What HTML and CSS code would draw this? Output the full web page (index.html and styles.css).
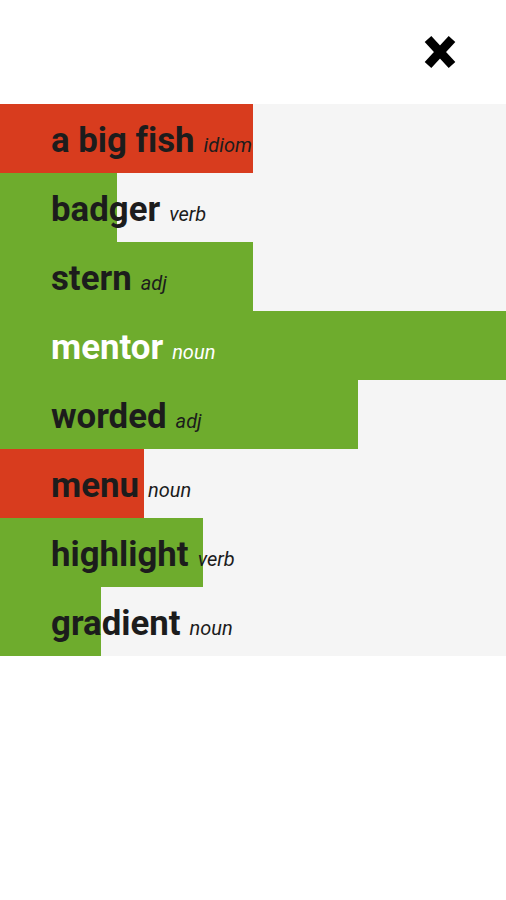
FILE: index.html
```html
<!DOCTYPE html>
<html>
<head>
<meta charset="utf-8">
<link rel="stylesheet" href="styles.css">
</head>
<body>
<header class="top">
  <button class="close" aria-label="Close">
    <svg width="32" height="34" viewBox="0 0 32 34">
      <path d="M4 4 L28 30 M28 4 L4 30" stroke="#000" stroke-width="9" stroke-linecap="butt" fill="none"/>
    </svg>
  </button>
</header>
<ul class="list">
  <li class="row"><div class="bar red" style="width:253px"></div><span class="word">a big fish</span><span class="pos">idiom</span></li>
  <li class="row"><div class="bar green" style="width:117px"></div><span class="word">badger</span><span class="pos">verb</span></li>
  <li class="row"><div class="bar green" style="width:253px"></div><span class="word">stern</span><span class="pos">adj</span></li>
  <li class="row light"><div class="bar green" style="width:506px"></div><span class="word">mentor</span><span class="pos">noun</span></li>
  <li class="row"><div class="bar green" style="width:358px"></div><span class="word">worded</span><span class="pos">adj</span></li>
  <li class="row"><div class="bar red" style="width:144px"></div><span class="word">menu</span><span class="pos">noun</span></li>
  <li class="row"><div class="bar green" style="width:203px"></div><span class="word">highlight</span><span class="pos">verb</span></li>
  <li class="row"><div class="bar green" style="width:101px"></div><span class="word">gradient</span><span class="pos">noun</span></li>
</ul>
</body>
</html>
```
FILE: styles.css
```css
html, body {
  margin: 0;
  padding: 0;
  background: #ffffff;
  font-family: Roboto, "Liberation Sans", sans-serif;
}
.top {
  height: 104px;
  display: flex;
  justify-content: flex-end;
  align-items: flex-start;
}
.close {
  border: 0;
  background: none;
  padding: 0;
  margin: 35px 50px 0 0;
  width: 32px;
  height: 34px;
  cursor: pointer;
}
.close svg { display: block; }
.list {
  list-style: none;
  margin: 0;
  padding: 0;
  background: #f5f5f5;
}
.row {
  position: relative;
  height: 69px;
  display: flex;
  align-items: baseline;
  padding-left: 51px;
  color: #1c1c1c;
  box-sizing: border-box;
  padding-top: 16px;
  font-variant-ligatures: none;
}
.bar {
  position: absolute;
  left: 0;
  top: 0;
  bottom: 0;
}
.red { background: #d83c1e; }
.green { background: #6eac2d; }
.word {
  position: relative;
  font-weight: 700;
  font-size: 34.8px;
  line-height: 40px;
}
.pos {
  position: relative;
  font-style: italic;
  font-size: 20px;
  margin-left: 9px;
}
.light { color: #ffffff; }
```
